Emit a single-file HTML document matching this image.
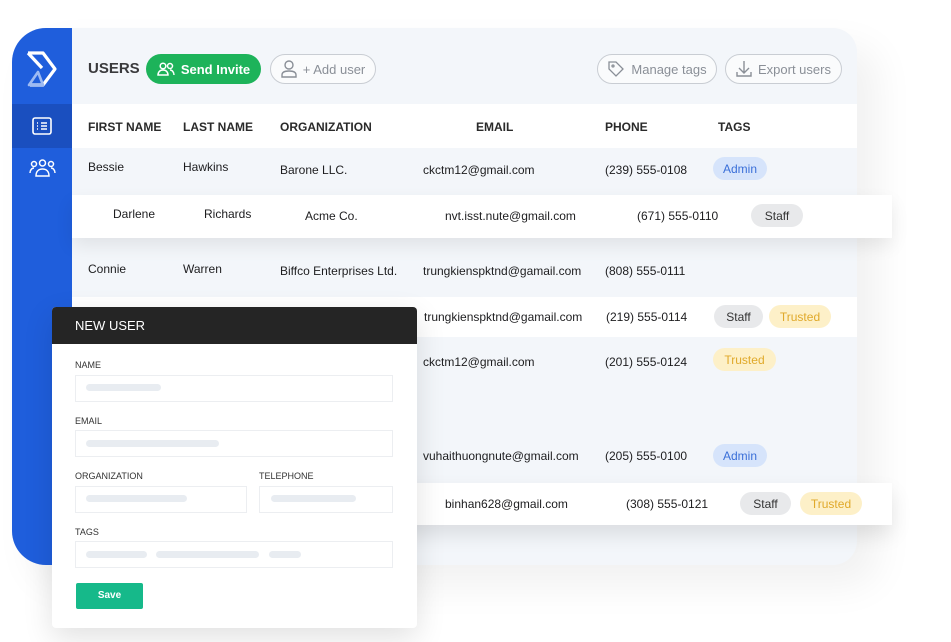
<!DOCTYPE html>
<html><head><meta charset="utf-8"><style>
*{margin:0;padding:0;box-sizing:border-box}
body{width:951px;height:642px;background:#fff;font-family:"Liberation Sans",sans-serif;position:relative;overflow:hidden;color:#1d1d1f}
.a{position:absolute}
.card{left:12px;top:28px;width:845px;height:537px;background:#f3f6fa;border-radius:34px 24px 24px 34px;overflow:hidden;box-shadow:20px 20px 40px rgba(0,0,0,.06)}
.side{left:12px;top:28px;width:60px;height:537px;background:#1f5edc;border-radius:34px 0 0 34px}
.t{font-size:12px;white-space:nowrap}
.h{font-size:12px;font-weight:bold;color:#2a2a2a}
.pill{position:absolute;height:30px;border-radius:15px;font-size:13px;display:flex;align-items:center;justify-content:center;gap:6px}
.tag{position:absolute;height:23px;border-radius:12px;font-size:12px;display:flex;align-items:center;justify-content:center}
.adm{background:#d6e4fb;color:#3a6fd8}
.stf{background:#e8e9eb;color:#333}
.tru{background:#fdf0c8;color:#e0a92a}
.row{position:absolute;background:#fff}
.lbl{position:absolute;font-size:9px;color:#333}
.inp{position:absolute;border:1px solid #eceef1;background:#fff;height:27px}
.bar{position:absolute;height:7px;border-radius:4px;background:#e8ecf1}
</style></head><body>
<div class="a card"></div>
<div class="a side"></div>
<div class="a" style="left:12px;top:104px;width:60px;height:44px;background:#1a4fbf"></div>
<svg class="a" style="left:24px;top:50px" width="36" height="38" viewBox="0 0 36 38"><path d="M4 3h15l12 16-12 16H6" fill="none" stroke="#fff" stroke-width="3.2" stroke-linejoin="round"/><path d="M4 3l14 15" stroke="#fff" stroke-width="3.2"/><path d="M5 35l9-13 5 13z" fill="none" stroke="#9dbaf2" stroke-width="2.6" stroke-linejoin="round"/></svg>
<svg class="a" style="left:32px;top:116px" width="20" height="20" viewBox="0 0 20 20" fill="none" stroke="#fff" stroke-width="1.6"><rect x="1" y="2" width="18" height="16" rx="2"/><path d="M5 7h1M9 7h6M5 10h1M9 10h6M5 13h1M9 13h6"/></svg>
<svg class="a" style="left:29px;top:158px" width="27" height="20" viewBox="0 0 27 20" fill="none" stroke="#fff" stroke-width="1.5"><circle cx="13.5" cy="5" r="3"/><circle cx="5" cy="6" r="2.5"/><circle cx="22" cy="6" r="2.5"/><path d="M7 18c0-5 3-7 6.5-7s6.5 2 6.5 7zM1 15c0-3 2-5 4-5M26 15c0-3-2-5-4-5"/></svg>

<div class="a" style="left:88px;top:60px;font-size:15px;font-weight:bold;color:#3a3a3c">USERS</div>
<div class="pill" style="left:146px;top:54px;width:115px;background:#1db35a;color:#fff;font-weight:bold"><svg width="18" height="14" viewBox="0 0 18 14" fill="none" stroke="#fff" stroke-width="1.5"><circle cx="6" cy="4" r="2.8"/><circle cx="13" cy="4" r="2.5"/><path d="M1 13c0-3 2-5 5-5s5 2 5 5zM13 8c2 0 4 2 4 5"/></svg>Send Invite</div>
<div class="pill" style="left:270px;top:54px;width:106px;border:1.5px solid #c9cdd3;color:#8a8f97;background:#fafbfc"><svg width="16" height="18" viewBox="0 0 16 18" fill="none" stroke="#8a8f97" stroke-width="1.4"><circle cx="8" cy="5" r="4"/><path d="M1 17v-2c0-3 3-4 7-4s7 1 7 4v2z"/></svg>+ Add user</div>
<div class="pill" style="left:597px;top:54px;width:120px;border:1.5px solid #c9cdd3;color:#8a8f97;background:#fafbfc"><svg width="18" height="18" viewBox="0 0 18 18" fill="none" stroke="#8a8f97" stroke-width="1.3"><path d="M2 2h7l7 7-7 7-7-7z"/><circle cx="6" cy="6" r="1"/></svg>Manage tags</div>
<div class="pill" style="left:725px;top:54px;width:117px;border:1.5px solid #c9cdd3;color:#8a8f97;background:#fafbfc"><svg width="16" height="18" viewBox="0 0 16 18" fill="none" stroke="#8a8f97" stroke-width="1.4"><path d="M8 1v11M3 8l5 5 5-5M1 12v4h14v-4"/></svg>Export users</div>

<div class="row" style="left:72px;top:104px;width:785px;height:44px"></div>
<div class="a h" style="left:88px;top:120px">FIRST NAME</div>
<div class="a h" style="left:183px;top:120px">LAST NAME</div>
<div class="a h" style="left:280px;top:120px">ORGANIZATION</div>
<div class="a h" style="left:476px;top:120px">EMAIL</div>
<div class="a h" style="left:605px;top:120px">PHONE</div>
<div class="a h" style="left:718px;top:120px">TAGS</div>

<div class="a t" style="left:88px;top:160px">Bessie</div>
<div class="a t" style="left:183px;top:160px">Hawkins</div>
<div class="a t" style="left:280px;top:163px">Barone LLC.</div>
<div class="a t" style="left:423px;top:163px">ckctm12@gmail.com</div>
<div class="a t" style="left:605px;top:163px">(239) 555-0108</div>
<div class="tag adm" style="left:713px;top:157px;width:54px">Admin</div>

<div class="row" style="left:72px;top:195px;width:820px;height:43px;box-shadow:0 8px 18px rgba(0,0,0,.08)"></div>
<div class="a t" style="left:113px;top:207px">Darlene</div>
<div class="a t" style="left:204px;top:207px">Richards</div>
<div class="a t" style="left:305px;top:209px">Acme Co.</div>
<div class="a t" style="left:445px;top:209px">nvt.isst.nute@gmail.com</div>
<div class="a t" style="left:637px;top:209px">(671) 555-0110</div>
<div class="tag stf" style="left:751px;top:204px;width:52px">Staff</div>

<div class="a t" style="left:88px;top:262px">Connie</div>
<div class="a t" style="left:183px;top:262px">Warren</div>
<div class="a t" style="left:280px;top:264px">Biffco Enterprises Ltd.</div>
<div class="a t" style="left:423px;top:264px">trungkienspktnd@gamail.com</div>
<div class="a t" style="left:605px;top:264px">(808) 555-0111</div>

<div class="row" style="left:72px;top:297px;width:785px;height:40px"></div>
<div class="a t" style="left:424px;top:310px">trungkienspktnd@gamail.com</div>
<div class="a t" style="left:606px;top:310px">(219) 555-0114</div>
<div class="tag stf" style="left:714px;top:305px;width:49px">Staff</div>
<div class="tag tru" style="left:769px;top:305px;width:62px">Trusted</div>

<div class="a t" style="left:423px;top:355px">ckctm12@gmail.com</div>
<div class="a t" style="left:605px;top:355px">(201) 555-0124</div>
<div class="tag tru" style="left:713px;top:348px;width:63px">Trusted</div>

<div class="a t" style="left:423px;top:449px">vuhaithuongnute@gmail.com</div>
<div class="a t" style="left:605px;top:449px">(205) 555-0100</div>
<div class="tag adm" style="left:713px;top:444px;width:54px">Admin</div>

<div class="row" style="left:72px;top:483px;width:820px;height:42px;box-shadow:0 10px 20px rgba(0,0,0,.1)"></div>
<div class="a t" style="left:445px;top:497px">binhan628@gmail.com</div>
<div class="a t" style="left:626px;top:497px">(308) 555-0121</div>
<div class="tag stf" style="left:740px;top:492px;width:51px">Staff</div>
<div class="tag tru" style="left:800px;top:492px;width:62px">Trusted</div>

<div class="a" style="left:52px;top:307px;width:365px;height:321px;background:#fff;border-radius:4px;box-shadow:0 10px 30px rgba(0,0,0,.12);overflow:hidden">
<div style="height:37px;background:#252525;color:#fff;font-size:13px;padding:11px 0 0 23px">NEW USER</div>
</div>
<div class="lbl" style="left:75px;top:360px">NAME</div>
<div class="inp" style="left:75px;top:375px;width:318px"></div><div class="bar" style="left:86px;top:384px;width:75px"></div>
<div class="lbl" style="left:75px;top:416px">EMAIL</div>
<div class="inp" style="left:75px;top:430px;width:318px"></div><div class="bar" style="left:86px;top:440px;width:133px"></div>
<div class="lbl" style="left:75px;top:471px">ORGANIZATION</div>
<div class="lbl" style="left:259px;top:471px">TELEPHONE</div>
<div class="inp" style="left:75px;top:486px;width:172px"></div><div class="bar" style="left:86px;top:495px;width:101px"></div>
<div class="inp" style="left:259px;top:486px;width:134px"></div><div class="bar" style="left:271px;top:495px;width:85px"></div>
<div class="lbl" style="left:75px;top:527px">TAGS</div>
<div class="inp" style="left:75px;top:541px;width:318px"></div>
<div class="bar" style="left:86px;top:551px;width:61px"></div><div class="bar" style="left:156px;top:551px;width:103px"></div><div class="bar" style="left:269px;top:551px;width:32px"></div>
<div class="a" style="left:76px;top:583px;width:67px;height:26px;background:#16b98a;border-radius:2px;color:#fff;font-size:10px;font-weight:bold;text-align:center;line-height:26px">Save</div>
</body></html>
